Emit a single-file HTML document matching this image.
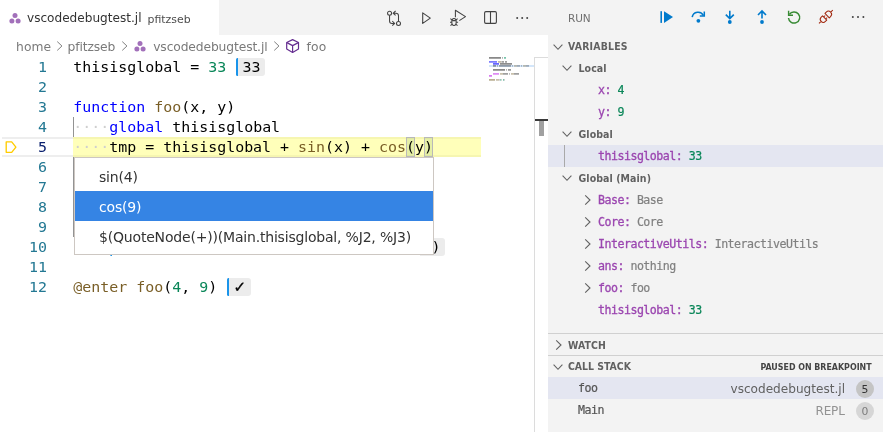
<!DOCTYPE html>
<html lang="en">
<head>
<meta charset="utf-8">
<title>vscodedebugtest.jl</title>
<style>
*{box-sizing:border-box;margin:0;padding:0}
html,body{width:883px;height:432px;overflow:hidden;background:#fff}
body{position:relative;will-change:transform;font-family:"DejaVu Sans","Liberation Sans",sans-serif;font-size:12px;color:#333}
.abs{position:absolute}
.t{position:absolute;white-space:pre;line-height:1}
svg{position:absolute;overflow:visible}
#topbar{left:0;top:0;width:883px;height:35px;background:#f3f3f3}
#tab{left:0;top:0;width:219px;height:35px;background:#fff}
#side{left:548px;top:35px;width:335px;height:397px;background:#f3f3f3}
.sel{position:absolute;left:548px;width:335px;height:22px;background:#e4e6f1}
.hd{font-family:"DejaVu Sans Condensed","Liberation Sans",sans-serif;font-weight:700;font-size:10.4px;color:#616161}
.cb{font-family:"DejaVu Sans Condensed","Liberation Sans",sans-serif;font-weight:700}
.lab{font-family:"DejaVu Sans Condensed","Liberation Sans",sans-serif;font-weight:700;font-size:10.5px;letter-spacing:.08px;color:#616161}
.sm{font-family:"DejaVu Sans Mono","Liberation Mono",monospace;font-size:11.6px;letter-spacing:-0.5px;color:#616161;-webkit-text-stroke:.2px}
.nm{color:#9b46b0;-webkit-text-stroke:.3px}
.num{color:#098658}
.val{color:#808080}
.hr{position:absolute;left:548px;width:335px;height:1px;background:#d0d0d0}
.badge{position:absolute;width:18px;height:18px;border-radius:9px;text-align:center;font-size:10.8px;line-height:19.6px}
.code{font-family:"DejaVu Sans Mono","Liberation Mono",monospace;font-size:14.95px;color:#000}
.ln{position:absolute;left:0;width:47px;text-align:right;color:#237893;white-space:pre;line-height:20px;height:20px}
.cl{position:absolute;left:73.25px;white-space:pre;line-height:20px;height:20px}
.kw{color:#0000ff}.fn{color:#795e26}.n{color:#098658}.ws{color:#cfcfcf}
.ivb{position:absolute;width:2px;height:18px;background:#1a94ea;border-radius:1.5px 0 0 1.5px}
.ivg{position:absolute;height:18px;background:#ececec;border-radius:0 3px 3px 0}
.bm{position:absolute;width:9px;height:20px;border:1px solid #b9b9b9;background:rgba(0,100,0,.1)}
#menu{left:74px;top:157px;width:360px;height:98px;background:#fff;border:1px solid #cdc7c2}
.mi{position:absolute;white-space:pre;line-height:1;font-size:14px;letter-spacing:-.19px;color:#333;left:99px}
.bc{color:#7a7a7a;font-size:12.3px}
</style>
</head>
<body>
<div id="topbar" class="abs"></div>
<div id="tab" class="abs"></div>
<svg style="left:9px;top:12.6px" width="12" height="11" viewBox="0 0 12 11"><circle cx="6" cy="2.6" r="2.5" fill="#a270ba"/><circle cx="2.9" cy="8" r="2.5" fill="#a270ba"/><circle cx="9.1" cy="8" r="2.5" fill="#a270ba"/></svg>
<span class="t" id="tabname" style="left:27px;top:12px;font-size:12.1px;letter-spacing:0;color:#333">vscodedebugtest.jl</span>
<span class="t" id="tabdesc" style="left:147.5px;top:14.5px;font-size:10.9px;letter-spacing:0;color:#4d4d4d">pfitzseb</span>
<svg id="i-compare" style="left:386px;top:10px" width="16" height="16" viewBox="0 0 16 16" fill="none" stroke="#424242" stroke-width="1.05">
<circle cx="3.55" cy="3.2" r="2"/><circle cx="12.5" cy="13.4" r="2"/>
<path d="M3.55 5.3V10.9Q3.55 13.4 6 13.4H8.3M6.3 11.2L8.6 13.4L6.3 15.6"/>
<path d="M12.5 11.3V5.7Q12.5 3.2 10 3.2H7.5M9.6 1L7.2 3.2L9.6 5.4"/></svg>
<svg id="i-play" style="left:418px;top:10px" width="16" height="16" viewBox="0 0 16 16" fill="none" stroke="#424242" stroke-width="1.1" stroke-linejoin="round"><path d="M4.7 2.9v10.5l7.6-5.25z"/></svg>
<svg id="i-debugalt" style="left:450px;top:10px" width="16" height="16" viewBox="0 0 16 16" fill="none" stroke="#424242" stroke-width="1.05" stroke-linejoin="round"><path d="M5.4 7.2V0.3l10.1 6.3-6.2 4"/><ellipse cx="4" cy="12" rx="2.2" ry="3.5"/><path d="M2.1 10.2L.4 8.7M5.9 10.2L7.6 8.7M1.8 12.3H0M6.2 12.3h1.9M2.2 14.2L.5 15.7M5.8 14.2l1.7 1.5M2.2 10.6h3.6"/></svg>
<svg id="i-split" style="left:482px;top:10px" width="16" height="16" viewBox="0 0 16 16" fill="none" stroke="#424242" stroke-width="1.1"><rect x="2.6" y="1.6" width="11.8" height="11.8" rx="1.3"/><path d="M8.5 1.6v11.8"/></svg>
<svg id="i-more1" style="left:514px;top:10px" width="16" height="16" viewBox="0 0 16 16" fill="#424242"><circle cx="3.2" cy="8" r="1"/><circle cx="8.2" cy="8" r="1"/><circle cx="13.2" cy="8" r="1"/></svg>
<span class="t bc" style="left:16px;top:41px;letter-spacing:.1px">home</span>
<span class="t bc" style="left:67.5px;top:41px;letter-spacing:-.12px">pfitzseb</span>
<span class="t bc" style="left:153.2px;top:41px;letter-spacing:-.12px">vscodedebugtest.jl</span>
<span class="t bc" style="left:306.5px;top:41px;letter-spacing:.15px">foo</span>
<svg style="left:50.65px;top:38.1px" width="16" height="16" viewBox="0 0 16 16" fill="none" stroke="#808080" stroke-width="1.0"><path d="M6.25 3.6L10.95 8L6.25 12.4"/></svg>
<svg style="left:115.55px;top:38.1px" width="16" height="16" viewBox="0 0 16 16" fill="none" stroke="#808080" stroke-width="1.0"><path d="M6.25 3.6L10.95 8L6.25 12.4"/></svg>
<svg style="left:268.25px;top:38.1px" width="16" height="16" viewBox="0 0 16 16" fill="none" stroke="#808080" stroke-width="1.0"><path d="M6.25 3.6L10.95 8L6.25 12.4"/></svg>
<svg style="left:134.2px;top:40.5px" width="12" height="11" viewBox="0 0 12 11"><circle cx="6" cy="2.6" r="2.5" fill="#a270ba"/><circle cx="2.9" cy="8" r="2.5" fill="#a270ba"/><circle cx="9.1" cy="8" r="2.5" fill="#a270ba"/></svg>
<svg id="i-cube" style="left:285px;top:38px" width="16" height="16" viewBox="0 0 16 16" fill="none" stroke="#652d90" stroke-width="1.2" stroke-linejoin="round"><path d="M7.6 1.6l5.9 2.9v6.6l-5.9 3.3-5.9-3.3V4.5z"/><path d="M1.9 4.6l5.7 3 5.7-3M7.6 7.6v6.6"/></svg>
<div class="code">
<div class="abs" style="left:2px;top:137px;width:479px;height:20px;border-top:2px solid #eee;border-bottom:2px solid #eee"></div>
<div class="abs" style="left:73.3px;top:137px;width:407.7px;height:20px;background:rgba(255,255,102,.45)"></div>
<div class="abs" style="left:73px;top:117px;width:1px;height:20px;background:#939393"></div>
<div class="abs" style="left:73px;top:157px;width:1px;height:80px;background:#939393"></div>
<div class="bm" style="left:406px;top:137px"></div><div class="bm" style="left:424px;top:137px"></div>
<div class="ivb" style="left:235.5px;top:57.5px"></div><div class="ivg" style="left:237.5px;top:57.5px;width:27px"></div><span class="cl" style="left:242.5px;top:57px">33</span>
<div class="ivb" style="left:109.5px;top:237.5px"></div><div class="ivg" style="left:420px;top:237.5px;width:24.5px"></div><span class="cl" style="left:431.5px;top:237px">)</span>
<div class="ivb" style="left:226.5px;top:277.5px"></div><div class="ivg" style="left:228.5px;top:277.5px;width:22px"></div><span class="cl" style="left:233.5px;top:277px"><span style="font-family:'DejaVu Sans',sans-serif;font-size:15px;-webkit-text-stroke:.3px">✓</span></span>
<span class="ln" style="top:57px">1</span><span class="cl" style="top:57px">thisisglobal = <span class="n">33</span></span>
<span class="ln" style="top:77px">2</span>
<span class="ln" style="top:97px">3</span><span class="cl" style="top:97px"><span class="kw">function</span> <span class="fn">foo</span>(x, y)</span>
<span class="ln" style="top:117px">4</span><span class="cl" style="top:117px"><span class="ws">····</span><span class="kw">global</span> thisisglobal</span>
<span class="ln" style="top:137px;color:#0b216f">5</span><span class="cl" style="top:137px"><span class="ws">····</span>tmp = thisisglobal + <span class="fn">sin</span>(x) + <span class="fn">cos</span>(y)</span>
<span class="ln" style="top:157px">6</span>
<span class="ln" style="top:177px">7</span>
<span class="ln" style="top:197px">8</span>
<span class="ln" style="top:217px">9</span>
<span class="ln" style="top:237px">10</span>
<span class="ln" style="top:257px">11</span>
<span class="ln" style="top:277px">12</span><span class="cl" style="top:277px"><span class="fn">@enter</span> <span class="fn">foo</span>(<span class="n">4</span>, <span class="n">9</span>)</span>
</div>
<svg id="i-frame" style="left:3px;top:139px" width="16" height="16" viewBox="0 0 16 16" fill="none" stroke="#ffcc00" stroke-width="1.35" stroke-linejoin="round"><path d="M3.2 2.9h5.5l4.2 5.2-4.2 5.2H3.2z"/></svg>
<div id="menu" class="abs"></div>
<div class="abs" style="left:75px;top:191px;width:358px;height:30px;background:#3584e4"></div>
<span class="mi" style="top:170px">sin(4)</span>
<span class="mi" style="top:200px;color:#fff">cos(9)</span>
<span class="mi" id="mi3" style="top:230px">$(QuoteNode(+))(Main.thisisglobal, %J2, %J3)</span>
<svg id="minimap" style="left:489px;top:57px" width="45" height="26" viewBox="0 0 45 26">
<rect x="0" y="8" width="45" height="2" fill="#d3e6fa"/>
<rect x="0" y="0.15" width="12" height="1.5" fill="#222" opacity="0.62"/><rect x="13" y="0.15" width="1" height="1.5" fill="#222" opacity="0.4"/><rect x="15" y="0.15" width="2" height="1.5" fill="#1f9d74" opacity="0.7"/>
<rect x="0" y="4.15" width="8" height="1.5" fill="#0000ff" opacity="0.6"/><rect x="9" y="4.15" width="3" height="1.5" fill="#8d7a4e" opacity="0.6"/><rect x="12" y="4.15" width="1" height="1.5" fill="#222" opacity="0.3"/><rect x="13" y="4.15" width="2" height="1.5" fill="#222" opacity="0.5"/><rect x="16" y="4.15" width="2" height="1.5" fill="#222" opacity="0.5"/>
<rect x="4" y="6.15" width="6" height="1.5" fill="#0000ff" opacity="0.7"/><rect x="11" y="6.15" width="12" height="1.5" fill="#222" opacity="0.6"/>
<rect x="4" y="8.15" width="3" height="1.5" fill="#222" opacity="0.5"/><rect x="8" y="8.15" width="1" height="1.5" fill="#222" opacity="0.35"/><rect x="10" y="8.15" width="12" height="1.5" fill="#222" opacity="0.45"/><rect x="23" y="8.15" width="1" height="1.5" fill="#222" opacity="0.3"/><rect x="25" y="8.15" width="3" height="1.5" fill="#8d7a4e" opacity="0.5"/><rect x="28" y="8.15" width="3" height="1.5" fill="#222" opacity="0.35"/><rect x="32" y="8.15" width="1" height="1.5" fill="#222" opacity="0.3"/><rect x="34" y="8.15" width="3" height="1.5" fill="#8d7a4e" opacity="0.5"/><rect x="37" y="8.15" width="3" height="1.5" fill="#222" opacity="0.35"/>
<rect x="4" y="12.15" width="12" height="1.5" fill="#222" opacity="0.62"/><rect x="17" y="12.15" width="1" height="1.5" fill="#222" opacity="0.4"/><rect x="19" y="12.15" width="3" height="1.5" fill="#222" opacity="0.55"/>
<rect x="4" y="16.15" width="6" height="1.5" fill="#c020e8" opacity="0.6"/><rect x="11" y="16.15" width="3" height="1.5" fill="#8d7a4e" opacity="0.55"/><rect x="14" y="16.15" width="5" height="1.5" fill="#222" opacity="0.5"/><rect x="20" y="16.15" width="1" height="1.5" fill="#222" opacity="0.35"/><rect x="22" y="16.15" width="3" height="1.5" fill="#8d7a4e" opacity="0.55"/><rect x="25" y="16.15" width="5" height="1.5" fill="#222" opacity="0.5"/>
<rect x="0" y="18.15" width="3" height="1.5" fill="#c020e8" opacity="0.7"/>
<rect x="0" y="22.15" width="6" height="1.5" fill="#8d7a4e" opacity="0.7"/><rect x="7" y="22.15" width="3" height="1.5" fill="#8d7a4e" opacity="0.55"/><rect x="10" y="22.15" width="1" height="1.5" fill="#222" opacity="0.25"/><rect x="11" y="22.15" width="1" height="1.5" fill="#1f9d74" opacity="0.6"/><rect x="12" y="22.15" width="1" height="1.5" fill="#222" opacity="0.25"/><rect x="14" y="22.15" width="1" height="1.5" fill="#1f9d74" opacity="0.7"/><rect x="15" y="22.15" width="1" height="1.5" fill="#222" opacity="0.25"/>
</svg>
<div class="abs" style="left:534px;top:57px;width:14px;height:375px;border-left:1px solid #dcdcdc;border-top:1px solid #dcdcdc"></div>
<div class="abs" style="left:535px;top:119px;width:13px;height:2px;background:#3a3a3a"></div>
<div class="abs" style="left:539px;top:121px;width:5px;height:15px;background:#a0a0a0"></div>
<div id="side" class="abs"></div>
<span class="t" id="run" style="left:568px;top:12.5px;font-size:10.5px;letter-spacing:-.1px;color:#6f6f6f">RUN</span>
<svg id="d-cont" style="left:658px;top:9px" width="16" height="16" viewBox="0 0 16 16" fill="#007acc"><rect x="2.4" y="2.2" width="1.6" height="11.7"/><path d="M6 2.2l9 5.85-9 5.85z"/></svg>
<svg id="d-over" style="left:690px;top:9px" width="16" height="16" viewBox="0 0 16 16" fill="none" stroke="#007acc" stroke-width="1.6"><path d="M2.2 8.2a6 6 0 0 1 11.3-1.6"/><path d="M14.3 2.4v4.6H9.8" stroke-width="1.5"/><circle cx="8.4" cy="11.8" r="1.9" fill="#007acc" stroke="none"/></svg>
<svg id="d-into" style="left:722px;top:9px" width="16" height="16" viewBox="0 0 16 16" fill="none" stroke="#007acc" stroke-width="1.6"><path d="M7.8 1.8v7.2M3.8 5.6l4 4 4-4"/><circle cx="7.8" cy="13" r="1.9" fill="#007acc" stroke="none"/></svg>
<svg id="d-out" style="left:754px;top:9px" width="16" height="16" viewBox="0 0 16 16" fill="none" stroke="#007acc" stroke-width="1.6"><path d="M8 9.6V2.4M4 6l4-4 4 4"/><circle cx="8" cy="13" r="1.9" fill="#007acc" stroke="none"/></svg>
<svg id="d-restart" style="left:786px;top:9px" width="16" height="16" viewBox="0 0 16 16" fill="none" stroke="#388a34" stroke-width="1.5"><path d="M3.4 5.4a5.6 5.6 0 1 1-.9 3.6"/><path d="M2.6 1.8v4.4h4.4" stroke-width="1.4"/></svg>
<svg id="d-disc" style="left:818px;top:9px" width="16" height="16" viewBox="0 0 16 16" fill="none" stroke="#a1260d" stroke-width="1.0" stroke-linejoin="round"><g transform="translate(7.9 7.8) rotate(-44)"><path d="M-9.6 0H-6.6M-1.7 -3H-3.6A3 3 0 0 0 -3.6 3H-1.7ZM-1.7 -1.4H.4M-1.7 1.4H.4M1.7 -3.1H3.5A3.1 3.1 0 0 1 3.5 3.1H1.7ZM6.6 0H9.6"/></g></svg>
<svg id="d-more" style="left:850px;top:9px" width="16" height="16" viewBox="0 0 16 16" fill="#424242"><circle cx="2.8" cy="8" r="1"/><circle cx="8" cy="8" r="1"/><circle cx="13.4" cy="8" r="1"/></svg>
<svg style="left:550px;top:38.6px" width="16" height="16" viewBox="0 0 16 16" fill="none" stroke="#616161" stroke-width="1.1"><path d="M3.6 5.7L8 10.3L12.4 5.7"/></svg>
<span class="t hd" id="h-var" style="left:568px;top:40.5px;letter-spacing:.2px">VARIABLES</span>
<div class="sel" style="top:145px"></div><div class="abs" style="left:564px;top:145px;width:1px;height:22px;background:#a9a9a9"></div>
<svg style="left:559.2px;top:60.3px" width="16" height="16" viewBox="0 0 16 16" fill="none" stroke="#616161" stroke-width="1.1"><path d="M3.6 5.7L8 10.3L12.4 5.7"/></svg>
<span class="t lab" id="s-local" style="left:578.5px;top:63px">Local</span>
<span class="t sm" style="left:598px;top:85px"><span class="nm">x:</span> <span class="num">4</span></span>
<span class="t sm" style="left:598px;top:107px"><span class="nm">y:</span> <span class="num">9</span></span>
<svg style="left:559.2px;top:126.30000000000001px" width="16" height="16" viewBox="0 0 16 16" fill="none" stroke="#616161" stroke-width="1.1"><path d="M3.6 5.7L8 10.3L12.4 5.7"/></svg>
<span class="t lab" id="s-global" style="left:578.5px;top:129px">Global</span>
<span class="t sm" style="left:598px;top:151px"><span class="nm">thisisglobal:</span> <span class="num">33</span></span>
<svg style="left:559.2px;top:170.3px" width="16" height="16" viewBox="0 0 16 16" fill="none" stroke="#616161" stroke-width="1.1"><path d="M3.6 5.7L8 10.3L12.4 5.7"/></svg>
<span class="t lab" id="s-gm" style="left:578.5px;top:173px">Global (Main)</span>
<svg style="left:579px;top:192px" width="16" height="16" viewBox="0 0 16 16" fill="none" stroke="#616161" stroke-width="1.1"><path d="M6.2 3.4L11.0 8L6.2 12.6"/></svg>
<span class="t sm" style="left:598px;top:195px"><span class="nm">Base:</span> <span class="val">Base</span></span>
<svg style="left:579px;top:214px" width="16" height="16" viewBox="0 0 16 16" fill="none" stroke="#616161" stroke-width="1.1"><path d="M6.2 3.4L11.0 8L6.2 12.6"/></svg>
<span class="t sm" style="left:598px;top:217px"><span class="nm">Core:</span> <span class="val">Core</span></span>
<svg style="left:579px;top:236px" width="16" height="16" viewBox="0 0 16 16" fill="none" stroke="#616161" stroke-width="1.1"><path d="M6.2 3.4L11.0 8L6.2 12.6"/></svg>
<span class="t sm" style="left:598px;top:239px"><span class="nm">InteractiveUtils:</span> <span class="val">InteractiveUtils</span></span>
<svg style="left:579px;top:258px" width="16" height="16" viewBox="0 0 16 16" fill="none" stroke="#616161" stroke-width="1.1"><path d="M6.2 3.4L11.0 8L6.2 12.6"/></svg>
<span class="t sm" style="left:598px;top:261px"><span class="nm">ans:</span> <span class="val">nothing</span></span>
<svg style="left:579px;top:280px" width="16" height="16" viewBox="0 0 16 16" fill="none" stroke="#616161" stroke-width="1.1"><path d="M6.2 3.4L11.0 8L6.2 12.6"/></svg>
<span class="t sm" style="left:598px;top:283px"><span class="nm">foo:</span> <span class="val">foo</span></span>
<span class="t sm" style="left:598px;top:305px"><span class="nm">thisisglobal:</span> <span class="num">33</span></span>
<div class="hr" style="top:333px"></div>
<svg style="left:550px;top:337.2px" width="16" height="16" viewBox="0 0 16 16" fill="none" stroke="#616161" stroke-width="1.1"><path d="M6.2 3.4L11.0 8L6.2 12.6"/></svg>
<span class="t hd" id="h-watch" style="left:568px;top:339.5px;letter-spacing:.1px">WATCH</span>
<div class="hr" style="top:355px"></div>
<svg style="left:550px;top:359px" width="16" height="16" viewBox="0 0 16 16" fill="none" stroke="#616161" stroke-width="1.1"><path d="M3.6 5.7L8 10.3L12.4 5.7"/></svg>
<span class="t hd" id="h-cs" style="left:568px;top:360.5px;letter-spacing:0">CALL STACK</span>
<span class="t cb" id="paused" style="left:760.5px;top:362.5px;font-size:8.8px;color:#444;letter-spacing:0">PAUSED ON BREAKPOINT</span>
<div class="sel" style="top:377px"></div>
<span class="t sm" style="left:578px;top:382.5px;color:#555">foo</span>
<span class="t" id="cs-file" style="left:730.5px;top:383px;font-size:12.1px;letter-spacing:0;color:#616161">vscodedebugtest.jl</span>
<div class="badge" style="left:856px;top:380px;background:#c4c4c4;color:#333">5</div>
<span class="t sm" style="left:578px;top:404.5px;color:#555">Main</span>
<span class="t" id="cs-repl" style="left:815.5px;top:405px;font-size:12px;letter-spacing:-.15px;color:#929292">REPL</span>
<div class="badge" style="left:856px;top:402px;background:#d6d6d6;color:#7c7c7c">0</div>
</body>
</html>
